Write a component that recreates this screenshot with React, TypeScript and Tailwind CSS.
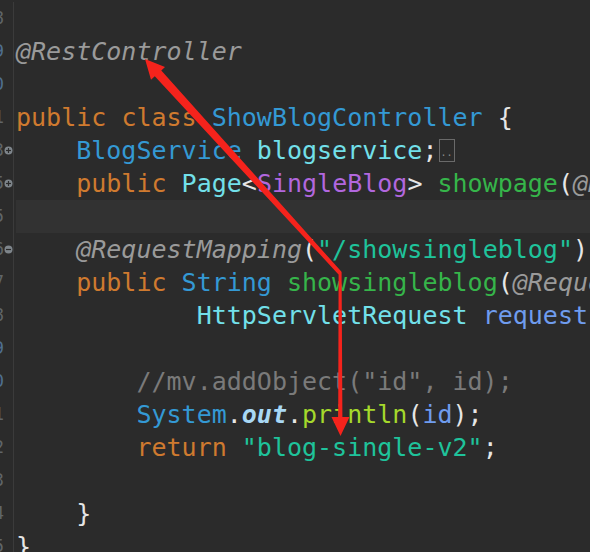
type Tok = [string, string];

const kw = "text-[#cf7a2f]";
const type = "text-[#3499d4]";
const cyan = "text-[#72e0ea]";
const purple = "text-[#b167de]";
const fn = "text-[#36b54a]";
const str = "text-[#1fc39b]";
const ann = "text-[#9a9a9a] italic";
const plain = "text-[#e6e6e6]";
const param = "text-[#6f9cee]";
const lime = "text-[#a5d92c]";
const field = "text-[#a8d8f5] italic font-bold";
const comment = "text-[#7a7a7a]";

type Row = {
  num: string;
  blue?: boolean;
  fold?: "plus" | "minus";
  active?: boolean;
  foldBox?: boolean;
  tokens: Tok[];
};

const rows: Row[] = [
  { num: "18", tokens: [] },
  { num: "19", blue: true, tokens: [["@RestController", ann]] },
  { num: "20", blue: true, tokens: [] },
  {
    num: "21",
    tokens: [
      ["public", kw],
      [" ", plain],
      ["class", kw],
      [" ", plain],
      ["ShowBlogController", type],
      [" {", plain],
    ],
  },
  {
    num: "23",
    fold: "plus",
    foldBox: true,
    tokens: [
      ["    ", plain],
      ["BlogService", type],
      [" ", plain],
      ["blogservice", cyan],
      [";", plain],
    ],
  },
  {
    num: "25",
    fold: "plus",
    tokens: [
      ["    ", plain],
      ["public", kw],
      [" ", plain],
      ["Page", cyan],
      ["<", plain],
      ["SingleBlog", purple],
      ["> ", plain],
      ["showpage", fn],
      ["(", plain],
      ["@RequestParam", ann],
    ],
  },
  { num: "25", active: true, tokens: [] },
  {
    num: "26",
    fold: "minus",
    tokens: [
      ["    ", plain],
      ["@RequestMapping", ann],
      ["(", plain],
      ['"/showsingleblog"', str],
      [")", plain],
    ],
  },
  {
    num: "27",
    tokens: [
      ["    ", plain],
      ["public", kw],
      [" ", plain],
      ["String", type],
      [" ", plain],
      ["showsingleblog", fn],
      ["(", plain],
      ["@RequestParam", ann],
    ],
  },
  {
    num: "28",
    tokens: [
      ["            ", plain],
      ["HttpServletRequest", cyan],
      [" ", plain],
      ["request", param],
      [",", plain],
    ],
  },
  { num: "29", blue: true, tokens: [] },
  {
    num: "30",
    blue: true,
    tokens: [
      ["        ", plain],
      ['//mv.addObject("id", id);', comment],
    ],
  },
  {
    num: "31",
    tokens: [
      ["        ", plain],
      ["System", type],
      [".", plain],
      ["out", field],
      [".", plain],
      ["println", lime],
      ["(", plain],
      ["id", param],
      [");", plain],
    ],
  },
  {
    num: "32",
    tokens: [
      ["        ", plain],
      ["return", kw],
      [" ", plain],
      ['"blog-single-v2"', str],
      [";", plain],
    ],
  },
  { num: "33", tokens: [] },
  { num: "34", tokens: [["    }", plain]] },
  { num: "35", tokens: [["}", plain]] },
];

function FoldMarker({ kind }: { kind: "plus" | "minus" }) {
  return (
    <svg width="9" height="9" viewBox="0 0 9 9" aria-hidden="true">
      <circle cx="4.5" cy="4.5" r="4" fill="#7e858b" />
      <line x1="2" y1="4.5" x2="7" y2="4.5" stroke="#2b2b2b" strokeWidth="1.2" />
      {kind === "plus" && (
        <line x1="4.5" y1="2" x2="4.5" y2="7" stroke="#2b2b2b" strokeWidth="1.2" />
      )}
    </svg>
  );
}

function Arrow() {
  return (
    <svg
      className="pointer-events-none absolute inset-0"
      width="590"
      height="552"
      viewBox="0 0 590 552"
      aria-hidden="true"
    >
      {/* diagonal shaft + head pointing at the annotation */}
      <polygon
        points="145,59 165,67 161.3,70.4 341.5,271.8 338.5,274.4 154.8,76.3 151,79.8"
        fill="#f5231c"
      />
      {/* vertical shaft + head */}
      <polygon points="338.6,272 341.6,272 342.4,417 349.5,417 340.5,436 331.5,417 338.2,417" fill="#f5231c" />
    </svg>
  );
}

export default function App() {
  return (
    <div
      className="relative h-[552px] w-[590px] overflow-hidden bg-[#2b2b2b] pt-[2px]"
      style={{ fontFamily: "'DejaVu Sans Mono', 'Liberation Mono', monospace" }}
    >
      {rows.map((row, i) => (
        <div key={i} className="flex h-[33px]">
          <div
            className={`flex w-[4px] shrink-0 items-center justify-end overflow-hidden text-[17px] ${
              row.blue ? "text-[#4f6f90]" : "text-[#5f6568]"
            }`}
          >
            <span>{row.num}</span>
          </div>
          <div className="flex w-[9px] shrink-0 items-center justify-center">
            {row.fold && <FoldMarker kind={row.fold} />}
          </div>
          <div className="w-px shrink-0 bg-[#3b3b3b]" />
          <div
            className={`ml-[2px] flex flex-1 items-center whitespace-pre text-[25px] leading-[33px] ${
              row.active ? "bg-[#323232]" : ""
            }`}
          >
            {row.tokens.map(([t, c], j) => (
              <span key={j} className={c}>
                {t}
              </span>
            ))}
            {row.foldBox && (
              <span className="ml-[1px] flex h-[23px] w-[16px] shrink-0 items-end justify-center border border-[#6a6a6a] pb-[3px] text-[10px] leading-none text-[#8a8a8a]">
                ..
              </span>
            )}
          </div>
        </div>
      ))}
      <Arrow />
    </div>
  );
}
